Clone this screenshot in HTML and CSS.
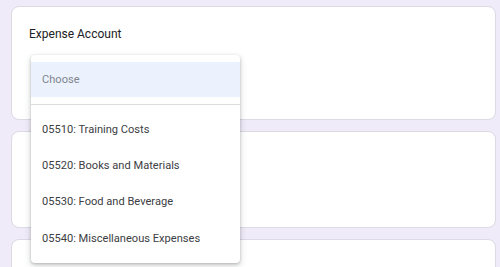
FILE: index.html
```html
<!DOCTYPE html>
<html>
<head>
<meta charset="utf-8">
<link rel="stylesheet" href="styles.css">
</head>
<body>
<div class="page">
  <div class="card card-first">
    <div class="q-title">Expense Account</div>
    <div class="select-anchor">
      <div class="menu">
        <div class="opt opt-placeholder">Choose</div>
        <div class="divider"></div>
        <div class="opt">05510: Training Costs</div>
        <div class="opt">05520: Books and Materials</div>
        <div class="opt">05530: Food and Beverage</div>
        <div class="opt">05540: Miscellaneous Expenses</div>
      </div>
    </div>
  </div>
  <div class="card card-second"></div>
  <div class="card card-third"></div>
</div>
</body>
</html>
```
FILE: styles.css
```css
html, body {
  margin: 0;
  padding: 0;
}
body {
  background: #efebf8;
  font-family: Roboto, "Noto Sans", Arial, sans-serif;
  color: #202124;
  overflow: hidden;
  height: 267px;
}
.page {
  display: flex;
  flex-direction: column;
  gap: 11px;
  padding: 6px 4px 0 11px;
}
.card {
  background: #fff;
  border: 1px solid #dcdae3;
  border-radius: 8px;
  box-sizing: border-box;
}
.card-first {
  height: 114px;
  padding: 17px 0 0 17px;
  position: relative;
}
.card-second {
  height: 97px;
}
.card-third {
  height: 40px;
}
.q-title {
  font-size: 12px;
  line-height: 20px;
  color: #202124;
}
.select-anchor {
  position: relative;
}
.menu {
  position: absolute;
  left: 2px;
  top: 11px;
  width: 209px;
  background: #fff;
  border-radius: 4px;
  box-shadow: 0 1px 3px rgba(60,64,67,0.3), 0 3px 6px 1px rgba(60,64,67,0.15);
  padding: 7px 0 7px;
  z-index: 5;
}
.opt {
  height: 36.3px;
  display: flex;
  align-items: center;
  padding-left: 11px;
  font-size: 11.1px;
  color: #3c4043;
}
.opt-placeholder {
  height: 35px;
  background: #ebf2fd;
  color: #80868b;
}
.divider {
  height: 1px;
  background: #dadce0;
  margin: 7px 0 6px;
}
```
